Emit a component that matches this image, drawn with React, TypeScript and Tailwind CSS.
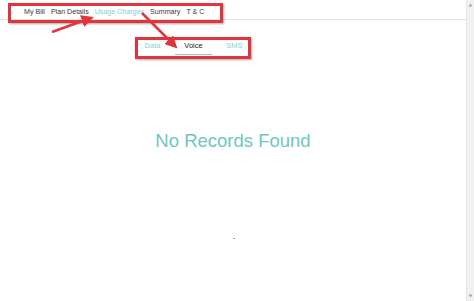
import React from 'react'

const navItems = ['My Bill', 'Plan Details', 'Usage Charges', 'Summary', 'T & C']
const tabs = ['Data', 'Voice', 'SMS']

export default function App() {
  return (
    <div
      className="relative flex h-[301px] w-[474px] overflow-hidden bg-white"
      style={{ fontFamily: '"Liberation Sans", Arial, sans-serif' }}
    >
      <div className="flex w-[466px] flex-col">
        {/* top nav */}
        <div className="flex h-[20px] items-center gap-[6px] border-b border-[#e3e3e3] pl-[24px] pt-[4px] text-[7.1px] leading-[10px]">
          {navItems.map((item) => (
            <span
              key={item}
              className={item === 'Usage Charges' ? 'text-[#86d2d2]' : 'text-[#3a3a3a]'}
            >
              {item}
            </span>
          ))}
        </div>

        {/* tabs */}
        <div className="ml-[132px] mt-[21px] flex text-[7.5px] leading-[10px]">
          {tabs.map((tab) => (
            <div key={tab} className="flex w-[41px] justify-center px-[2px]">
              <span
                className={
                  tab === 'Voice'
                    ? 'w-full border-b border-[#b9b9b9] pb-[3px] text-center text-[#222222]'
                    : 'w-full pb-[3px] text-center text-[#86d2d2]'
                }
              >
                {tab}
              </span>
            </div>
          ))}
        </div>

        <div className="mt-[76px] text-center text-[18.5px] leading-[19px] text-[#6ec7c4]">
          No Records Found
        </div>

        <div className="ml-[233px] mt-[88px] h-[1px] w-[2px] bg-[#9a9a9a]" />
      </div>

      {/* scrollbar */}
      <div className="flex w-[8px] flex-col items-center justify-between border-l border-[#e6e6e6] bg-[#f1f1f1] py-[3px]">
        <svg width="5" height="4" viewBox="0 0 5 4">
          <path d="M2.5 0.5 L4.5 3.5 L0.5 3.5 Z" fill="#a5a5a5" />
        </svg>
        <svg width="5" height="4" viewBox="0 0 5 4">
          <path d="M0.5 0.5 L4.5 0.5 L2.5 3.5 Z" fill="#a5a5a5" />
        </svg>
      </div>

      {/* annotation overlays */}
      <div className="pointer-events-none absolute left-[8px] top-[3px] h-[20px] w-[215px] border-[3px] border-[#e2343c] shadow-[1px_1px_2px_rgba(0,0,0,0.35)]" />
      <div className="pointer-events-none absolute left-[135px] top-[37px] h-[22px] w-[116px] border-[3px] border-[#e2343c] shadow-[1px_1px_2px_rgba(0,0,0,0.35)]" />
      <svg className="pointer-events-none absolute left-0 top-0" width="474" height="301">
        <defs>
          <marker id="head" markerWidth="5" markerHeight="5" refX="2.5" refY="2.5" orient="auto">
            <path d="M0 0 L5 2.5 L0 5 Z" fill="#e2343c" />
          </marker>
        </defs>
        <line x1="52" y1="32" x2="88" y2="19" stroke="#e2343c" strokeWidth="2.5" markerEnd="url(#head)" />
        <line x1="142" y1="13" x2="173" y2="44" stroke="#e2343c" strokeWidth="2.5" markerEnd="url(#head)" />
      </svg>
    </div>
  )
}
